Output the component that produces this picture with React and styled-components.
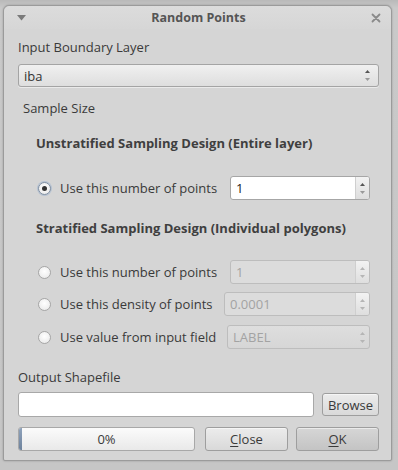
import React from "react";
import styled, { createGlobalStyle } from "styled-components";

const Global = createGlobalStyle`
  html, body { margin: 0; padding: 0; }
  body {
    background: #c4c4c4;
    font-family: "Open Sans", "DejaVu Sans", sans-serif;
    width: 398px; height: 470px; overflow: hidden;
  }
`;

const Desk = styled.div`
  width: 398px;
  height: 470px;
  box-sizing: border-box;
  padding: 5px 6px 0 3px;
  background: linear-gradient(#b9b9b9, #c9c9c9 8px, #c6c6c6);
`;

const Win = styled.div`
  width: 389px;
  height: 456px;
  box-sizing: border-box;
  background: #d5d5d5;
  border: 1px solid #9b9b9b;
  border-radius: 6px 6px 2px 2px;
  box-shadow: 0 0 2px rgba(0,0,0,0.25);
  display: flex;
  flex-direction: column;
  color: #3a3a3a;
  font-size: 13px;
`;

const TitleBar = styled.div`
  height: 23px;
  display: flex;
  align-items: center;
  justify-content: space-between;
  padding: 0 10px 0 13px;
  background: linear-gradient(#dcdcdc, #d6d6d6);
  border-radius: 6px 6px 0 0;
`;

const Title = styled.div`
  font-weight: bold;
  font-size: 12.5px;
  color: #555;
`;

const Body = styled.div`
  display: flex;
  flex-direction: column;
  padding: 0 12px 0 14px;
`;

const Label = styled.div`
  height: 18px;
  line-height: 18px;
  margin-top: ${p => p.$mt || 0}px;
  margin-left: ${p => p.$ml || 0}px;
  font-weight: ${p => (p.$bold ? "bold" : "normal")};
  color: ${p => (p.$bold ? "#3f3f3f" : "#3a3a3a")};
`;

const Combo = styled.div`
  height: 23px;
  box-sizing: border-box;
  margin-top: ${p => p.$mt || 0}px;
  border: 1px solid #a4a4a4;
  border-radius: 3px;
  background: linear-gradient(#f0f0f0, #dedede);
  box-shadow: 0 1px 0 rgba(255,255,255,0.5);
  display: flex;
  align-items: center;
  justify-content: space-between;
  padding: 0 4px 0 5px;
  color: #333;
`;

const Row = styled.div`
  display: flex;
  align-items: center;
  height: 24px;
  margin-top: ${p => p.$mt || 0}px;
  padding-left: ${p => p.$pl || 0}px;
  padding-right: 9px;
`;

const Radio = styled.span`
  width: 13px;
  height: 13px;
  border-radius: 50%;
  box-sizing: border-box;
  border: 1px solid #a6a6a6;
  background: radial-gradient(circle at 50% 40%, #ffffff, #e6e6e6);
  display: flex;
  align-items: center;
  justify-content: center;
  flex: none;
  ${p => p.$checked && `
    border-color: #7f8fa3;
    box-shadow: 0 0 0 1px rgba(150,175,210,0.5);
    &::after { content: ""; width: 5px; height: 5px; border-radius: 50%; background: #333; }
  `}
`;

const RadioText = styled.span`
  margin-left: 9px;
  white-space: nowrap;
`;

const Spin = styled.div`
  margin-left: auto;
  width: ${p => p.$w}px;
  height: 24px;
  box-sizing: border-box;
  border: 1px solid ${p => (p.$disabled ? "#bdbdbd" : "#a6a6a6")};
  border-radius: 3px;
  background: ${p => (p.$disabled ? "#dcdcdc" : "#ffffff")};
  display: flex;
  align-items: center;
  color: ${p => (p.$disabled ? "#a3a3a3" : "#222")};
  ${p => p.$combo && "background: linear-gradient(#dedede, #d6d6d6);"}
`;

const SpinText = styled.span`
  flex: 1;
  padding-left: 5px;
`;

const Arrows = styled.div`
  width: 13px;
  align-self: stretch;
  border-left: 1px solid ${p => (p.$combo ? "transparent" : "#cfcfcf")};
  background: ${p => (p.$combo ? "transparent" : "linear-gradient(#f2f2f2, #dedede)")};
  border-radius: 0 2px 2px 0;
  display: flex;
  flex-direction: column;
  align-items: center;
  justify-content: center;
  gap: 5px;
`;

const Tri = ({ up, color }) => (
  <svg width="5" height="3" viewBox="0 0 5 3" style={{ display: "block" }}>
    <path d={up ? "M0 3 L2.5 0 L5 3 Z" : "M0 0 L2.5 3 L5 0 Z"} fill={color} />
  </svg>
);

const SpinArrows = ({ combo, disabled }) => (
  <Arrows $combo={combo}>
    <Tri up color={disabled ? "#b5b5b5" : "#555"} />
    <Tri color={disabled ? "#b5b5b5" : "#999"} />
  </Arrows>
);

const Line = styled.div`
  display: flex;
  align-items: center;
  gap: ${p => p.$gap ?? 8}px;
  margin-top: ${p => p.$mt || 0}px;
`;

const TextInput = styled.div`
  flex: 1;
  height: 25px;
  box-sizing: border-box;
  border: 1px solid #a8a8a8;
  border-radius: 3px;
  background: #fff;
`;

const Button = styled.div`
  flex: none;
  width: ${p => p.$w}px;
  height: ${p => p.$h || 24}px;
  margin-left: ${p => p.$ml || 0}px;
  box-sizing: border-box;
  border: 1px solid #9e9e9e;
  border-radius: 3px;
  background: ${p => (p.$default ? "linear-gradient(#d6d6d6, #c4c4c4)" : "linear-gradient(#ececec, #d9d9d9)")};
  display: flex;
  align-items: center;
  justify-content: center;
  color: #3a3a3a;
  font-size: 13px;
  box-shadow: inset 0 1px 0 rgba(255,255,255,0.5);
`;

const U = styled.span`
  text-decoration: underline;
  text-underline-offset: 2px;
`;

const Progress = styled.div`
  flex: none;
  width: 177px;
  height: 24px;
  box-sizing: border-box;
  border: 1px solid #a8a8a8;
  border-radius: 3px;
  background: linear-gradient(#fbfbfb, #e9e9e9);
  display: flex;
  align-items: center;
  position: relative;
`;

const Fill = styled.div`
  position: absolute;
  left: 0; top: 0; bottom: 0;
  width: 3px;
  background: linear-gradient(#8ea2bb, #6d829c);
  border-radius: 2px 0 0 2px;
`;

const ProgText = styled.span`
  flex: 1;
  text-align: center;
  color: #3a3a3a;
`;

export default function App() {
  return (
    <Desk>
      <Global />
      <Win>
        <TitleBar>
          <svg width="9" height="6" viewBox="0 0 9 6"><path d="M0 0 L9 0 L4.5 5.5 Z" fill="#7a7a7a" /></svg>
          <Title>Random Points</Title>
          <svg width="10" height="10" viewBox="0 0 10 10"><path d="M1.5 1.5 L8.5 8.5 M8.5 1.5 L1.5 8.5" stroke="#8a8a8a" strokeWidth="1.8" strokeLinecap="round" /></svg>
        </TitleBar>
        <Body>
          <Label $mt={9}>Input Boundary Layer</Label>
          <Combo $mt={8}>
            <span>iba</span>
            <SpinArrows combo />
          </Combo>
          <Label $mt={12} $ml={5}>Sample Size</Label>
          <Label $mt={17} $ml={18} $bold>Unstratified Sampling Design (Entire layer)</Label>
          <Row $mt={24} $pl={20}>
            <Radio $checked />
            <RadioText>Use this number of points</RadioText>
            <Spin $w={140}>
              <SpinText>1</SpinText>
              <SpinArrows />
            </Spin>
          </Row>
          <Label $mt={19} $ml={18} $bold>Stratified Sampling Design (Individual polygons)</Label>
          <Row $mt={23} $pl={20}>
            <Radio />
            <RadioText>Use this number of points</RadioText>
            <Spin $w={140} $disabled>
              <SpinText>1</SpinText>
              <SpinArrows disabled />
            </Spin>
          </Row>
          <Row $mt={8} $pl={20}>
            <Radio />
            <RadioText>Use this density of points</RadioText>
            <Spin $w={146} $disabled>
              <SpinText>0.0001</SpinText>
              <SpinArrows disabled />
            </Spin>
          </Row>
          <Row $mt={9} $pl={20}>
            <Radio />
            <RadioText>Use value from input field</RadioText>
            <Spin $w={143} $disabled $combo>
              <SpinText>LABEL</SpinText>
              <SpinArrows combo disabled />
            </Spin>
          </Row>
          <Label $mt={19}>Output Shapefile</Label>
          <Line $mt={6} $gap={8}>
            <TextInput />
            <Button $w={57} $h={23}>Browse</Button>
          </Line>
          <Line $mt={10} $gap={0}>
            <Progress>
              <Fill />
              <ProgText>0%</ProgText>
            </Progress>
            <Button $w={83} $ml={10}><U>C</U>lose</Button>
            <Button $w={83} $ml={8} $default><U>O</U>K</Button>
          </Line>
        </Body>
      </Win>
    </Desk>
  );
}
